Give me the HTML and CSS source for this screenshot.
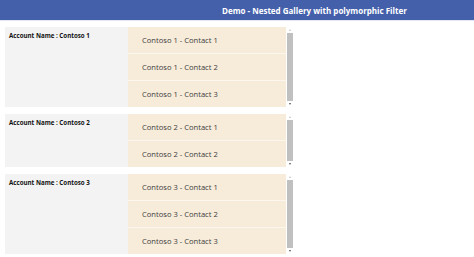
FILE: index.html
```html
<!DOCTYPE html>
<html>
<head>
<meta charset="utf-8">
<link rel="stylesheet" href="styles.css">
</head>
<body>
<header class="topbar"><h1 class="title">Demo - Nested Gallery with polymorphic Filter</h1></header>
<main class="galleries">
  <section class="gallery">
    <div class="account">Account Name : Contoso 1</div>
    <div class="contacts">
      <div class="contact">Contoso 1 - Contact 1</div>
      <div class="contact">Contoso 1 - Contact 2</div>
      <div class="contact">Contoso 1 - Contact 3</div>
    </div>
    <div class="scrollbar"><span class="arrow up"></span><span class="thumb"></span><span class="arrow down"></span></div>
  </section>
  <section class="gallery">
    <div class="account">Account Name : Contoso 2</div>
    <div class="contacts">
      <div class="contact">Contoso 2 - Contact 1</div>
      <div class="contact">Contoso 2 - Contact 2</div>
    </div>
    <div class="scrollbar"><span class="arrow up"></span><span class="thumb"></span><span class="arrow down"></span></div>
  </section>
  <section class="gallery">
    <div class="account">Account Name : Contoso 3</div>
    <div class="contacts">
      <div class="contact">Contoso 3 - Contact 1</div>
      <div class="contact">Contoso 3 - Contact 2</div>
      <div class="contact">Contoso 3 - Contact 3</div>
    </div>
    <div class="scrollbar"><span class="arrow up"></span><span class="thumb"></span><span class="arrow down"></span></div>
  </section>
</main>
</body>
</html>
```
FILE: styles.css
```css
html, body {
  margin: 0;
  padding: 0;
  background: #ffffff;
  font-family: "Open Sans", "Liberation Sans", sans-serif;
  overflow: hidden;
}
.topbar {
  height: 20px;
  background: #4560ab;
  border-bottom: 1px solid #e4e8f3;
  display: flex;
  align-items: center;
  padding-left: 222px;
}
.title {
  margin: 0;
  color: #ffffff;
  font-size: 8px;
  font-weight: 700;
  white-space: nowrap;
}
.galleries {
  padding: 6px 0 0 5px;
  display: flex;
  flex-direction: column;
  gap: 6px;
}
.gallery {
  display: flex;
  width: 288px;
  padding-bottom: 1px;
}
.account {
  width: 115px;
  background: #f3f3f3;
  padding: 4px 4px 0 4px;
  font-size: 6.2px;
  font-weight: 700;
  color: #111;
  white-space: nowrap;
}
.contacts {
  width: 158px;
  display: flex;
  flex-direction: column;
  gap: 1px;
  background: #fbf6ee;
}
.contact {
  height: 26px;
  line-height: 26px;
  background: #f7ebda;
  padding-left: 14px;
  font-size: 7.6px;
  color: #3c3c3c;
  white-space: nowrap;
}
.scrollbar {
  width: 7px;
  display: flex;
  flex-direction: column;
  align-items: center;
  background: #ffffff;
}
.arrow {
  width: 0;
  height: 0;
  border-left: 1.5px solid transparent;
  border-right: 1.5px solid transparent;
  margin: 2px 0;
}
.arrow.up {
  border-bottom: 2px solid #c4c4c4;
}
.arrow.down {
  border-top: 2px solid #555;
}
.thumb {
  flex: 1;
  width: 6px;
  background: #c0c0c0;
}
```
